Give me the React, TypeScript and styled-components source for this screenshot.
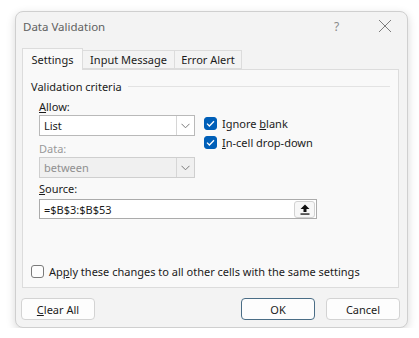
import React from 'react';
import styled, { createGlobalStyle } from 'styled-components';

const GlobalStyle = createGlobalStyle`
  body {
    margin: 0;
    background: #ffffff;
    font-family: "Noto Sans", "Open Sans", sans-serif;
    font-size: 11px;
    color: #1b1b1b;
  }
`;

const Dialog = styled.div`
  box-sizing: border-box;
  margin: 11px 0 0 15px;
  width: 393px;
  height: 317px;
  background: #f3f3f3;
  border: 1px solid #cfcfcf;
  border-radius: 8px;
  box-shadow: 0 3px 10px rgba(0, 0, 0, 0.16);
  display: flex;
  flex-direction: column;
`;

const TitleBar = styled.div`
  height: 28px;
  display: flex;
  align-items: center;
  padding-left: 7px;
  margin-bottom: 8px;
`;

const Title = styled.div`
  flex: 1;
  color: #616161;
  font-size: 11.5px;
`;

const HelpMark = styled.div`
  width: 14px;
  color: #8a8a8a;
  font-size: 12px;
  margin-right: 30px;
`;

const CloseIcon = styled.svg`
  width: 14px;
  height: 14px;
  margin-right: 15px;
`;

const TabStrip = styled.div`
  display: flex;
  align-items: flex-end;
  padding-left: 6px;
  height: 21px;
  position: relative;
  z-index: 1;
`;

const Tab = styled.div<{ $active?: boolean; $w: number }>`
  box-sizing: border-box;
  width: ${(p) => p.$w}px;
  height: ${(p) => (p.$active ? '22px' : '19px')};
  margin-bottom: ${(p) => (p.$active ? '-1px' : '0')};
  display: flex;
  align-items: center;
  justify-content: center;
  background: ${(p) => (p.$active ? '#f9f9f9' : '#f3f3f3')};
  border: 1px solid #dcdcdc;
  border-bottom: ${(p) => (p.$active ? 'none' : '1px solid #dcdcdc')};
  margin-left: ${(p) => (p.$active ? '0' : '-1px')};
  color: #1b1b1b;
`;

const Panel = styled.div`
  box-sizing: border-box;
  margin: 0 8px 0 6px;
  height: 219px;
  background: #f9f9f9;
  border: 1px solid #dcdcdc;
  padding: 8px 8px 0 8px;
  display: flex;
  flex-direction: column;
`;

const GroupHeader = styled.div`
  display: flex;
  align-items: center;
  height: 16px;
  gap: 6px;
  &::after {
    content: '';
    flex: 1;
    height: 1px;
    background: #e3e3e3;
  }
`;

const Criteria = styled.div`
  padding-left: 8px;
  margin-top: 5px;
  display: flex;
  flex-direction: column;
`;

const Label = styled.div<{ $disabled?: boolean }>`
  height: 16px;
  line-height: 16px;
  color: ${(p) => (p.$disabled ? '#9a9a9a' : '#1b1b1b')};
`;

const TopRow = styled.div`
  display: flex;
  gap: 9px;
`;

const Fields = styled.div`
  display: flex;
  flex-direction: column;
  width: 156px;
`;

const Combo = styled.div<{ $disabled?: boolean }>`
  box-sizing: border-box;
  height: 21px;
  display: flex;
  align-items: stretch;
  border: 1px solid ${(p) => (p.$disabled ? '#cfcfcf' : '#b9b9b9')};
  background: ${(p) => (p.$disabled ? '#f0f0f0' : '#ffffff')};
  color: ${(p) => (p.$disabled ? '#8f8f8f' : '#1b1b1b')};
  margin-bottom: 5px;
`;

const ComboText = styled.div`
  flex: 1;
  padding-left: 4px;
  display: flex;
  align-items: center;
`;

const ComboArrow = styled.div`
  width: 17px;
  border-left: 1px solid #d6d6d6;
  display: flex;
  align-items: center;
  justify-content: center;
`;

const Checks = styled.div`
  margin-top: 18px;
  display: flex;
  flex-direction: column;
  gap: 6px;
`;

const CheckRow = styled.label`
  display: flex;
  align-items: center;
  gap: 5px;
  height: 13px;
`;

const Box = styled.span<{ $checked?: boolean }>`
  box-sizing: border-box;
  width: 13px;
  height: 13px;
  border-radius: 3px;
  background: ${(p) => (p.$checked ? '#005fb8' : '#fdfdfd')};
  border: 1px solid ${(p) => (p.$checked ? '#005fb8' : '#7a7a7a')};
  display: flex;
  align-items: center;
  justify-content: center;
`;

const SourceLabel = styled(Label)`
  margin-top: -2px;
  margin-bottom: 2px;
`;

const SourceInput = styled.div`
  box-sizing: border-box;
  width: 278px;
  height: 20px;
  border: 1px solid #ababab;
  background: #ffffff;
  display: flex;
  align-items: center;
  padding: 0 1px 0 4px;
`;

const SourceText = styled.div`
  flex: 1;
`;

const CollapseButton = styled.div`
  box-sizing: border-box;
  width: 21px;
  height: 17px;
  border: 1px solid #d2d2d2;
  border-radius: 3px;
  background: #f7f7f7;
  display: flex;
  align-items: center;
  justify-content: center;
`;

const ApplyRow = styled(CheckRow)`
  margin-top: auto;
  margin-bottom: 9px;
  gap: 5px;
`;

const Footer = styled.div`
  display: flex;
  align-items: center;
  padding: 10px 7px 0 5px;
`;

const Button = styled.div<{ $primary?: boolean }>`
  box-sizing: border-box;
  width: 74px;
  height: 22px;
  display: flex;
  align-items: center;
  justify-content: center;
  background: #fdfdfd;
  border: 1px solid ${(p) => (p.$primary ? '#4a6d86' : '#d3d3d3')};
  border-radius: 4px;
  color: #1b1b1b;
`;

const Spacer = styled.div`
  flex: 1;
`;

const Chevron = () => (
  <svg width="9" height="6" viewBox="0 0 9 6">
    <path d="M0.5 0.8 L4.5 4.8 L8.5 0.8" fill="none" stroke="#7a7a7a" strokeWidth="1" />
  </svg>
);

const Tick = () => (
  <svg width="9" height="7" viewBox="0 0 9 7">
    <path d="M1 3.6 L3.4 6 L8 1.2" fill="none" stroke="#ffffff" strokeWidth="1.3" />
  </svg>
);

const UploadArrow = () => (
  <svg width="10" height="11" viewBox="0 0 10 11">
    <path d="M5 0.5 L9.5 5 L6.5 5 L6.5 8 L3.5 8 L3.5 5 L0.5 5 Z" fill="#111" />
    <rect x="0.5" y="9.4" width="9" height="1.3" fill="#111" />
  </svg>
);

export default function App() {
  return (
    <>
      <GlobalStyle />
      <Dialog>
        <TitleBar>
          <Title>Data Validation</Title>
          <HelpMark>?</HelpMark>
          <CloseIcon viewBox="0 0 14 14">
            <path d="M1 1 L13 13 M13 1 L1 13" stroke="#7d7d7d" strokeWidth="1" />
          </CloseIcon>
        </TitleBar>
        <TabStrip>
          <Tab $active $w={61}>Settings</Tab>
          <Tab $w={93}>Input Message</Tab>
          <Tab $w={68}>Error Alert</Tab>
        </TabStrip>
        <Panel>
          <GroupHeader>Validation criteria</GroupHeader>
          <Criteria>
            <TopRow>
              <Fields>
                <Label>
                  <u>A</u>llow:
                </Label>
                <Combo>
                  <ComboText>List</ComboText>
                  <ComboArrow>
                    <Chevron />
                  </ComboArrow>
                </Combo>
                <Label $disabled>Data:</Label>
                <Combo $disabled>
                  <ComboText>between</ComboText>
                  <ComboArrow>
                    <Chevron />
                  </ComboArrow>
                </Combo>
              </Fields>
              <Checks>
                <CheckRow>
                  <Box $checked>
                    <Tick />
                  </Box>
                  <span>
                    Ignore <u>b</u>lank
                  </span>
                </CheckRow>
                <CheckRow>
                  <Box $checked>
                    <Tick />
                  </Box>
                  <span>
                    <u>I</u>n-cell drop-down
                  </span>
                </CheckRow>
              </Checks>
            </TopRow>
            <SourceLabel>
              <u>S</u>ource:
            </SourceLabel>
            <SourceInput>
              <SourceText>=$B$3:$B$53</SourceText>
              <CollapseButton>
                <UploadArrow />
              </CollapseButton>
            </SourceInput>
          </Criteria>
          <ApplyRow>
            <Box />
            <span>
              Ap<u>p</u>ly these changes to all other cells with the same settings
            </span>
          </ApplyRow>
        </Panel>
        <Footer>
          <Button>
            <span>
              <u>C</u>lear All
            </span>
          </Button>
          <Spacer />
          <Button $primary>OK</Button>
          <Button style={{ marginLeft: 11 }}>Cancel</Button>
        </Footer>
      </Dialog>
    </>
  );
}
